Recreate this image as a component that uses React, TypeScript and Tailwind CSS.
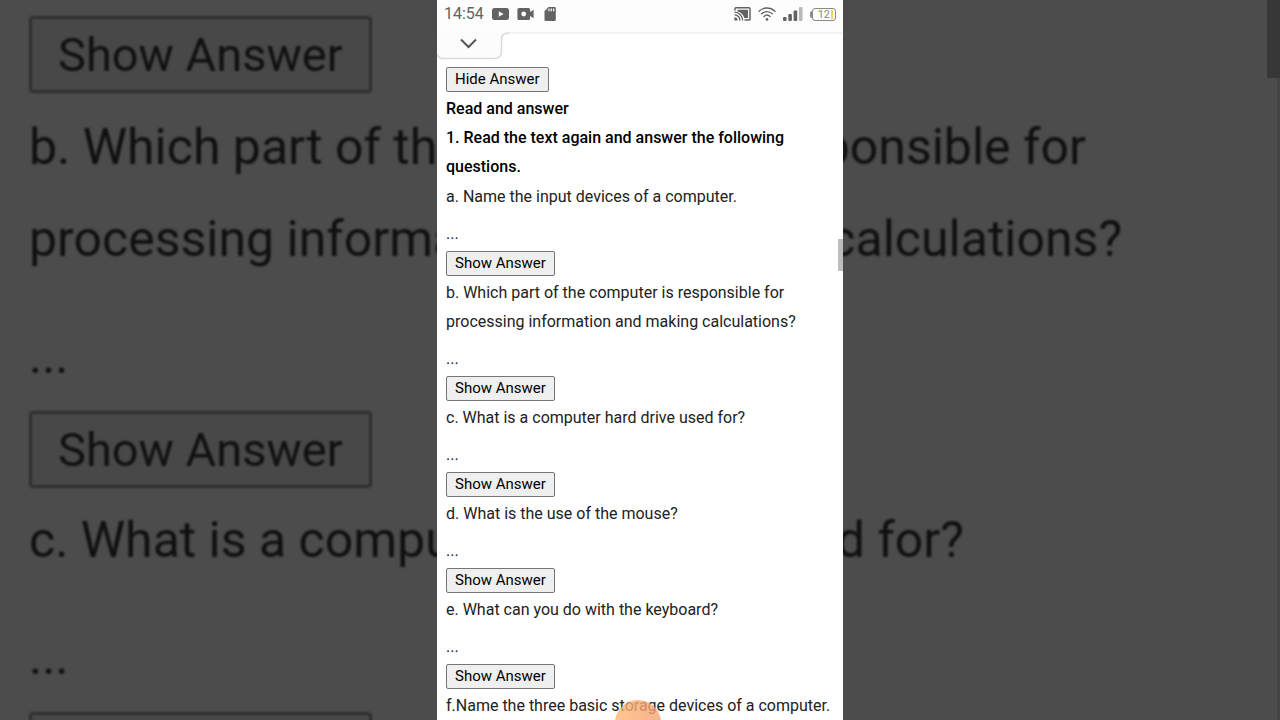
import React from 'react';

const questions = [
  'a. Name the input devices of a computer.',
  'b. Which part of the computer is responsible for processing information and making calculations?',
  'c. What is a computer hard drive used for?',
  'd. What is the use of the mouse?',
  'e. What can you do with the keyboard?',
];

function StatusBar() {
  return (
    <header className="flex h-[33px] items-start justify-between border-b border-[#f0f0f0] bg-[#fdfdfd] px-[7px] pt-1 text-[#636363] shadow-[0_1px_2px_#f3f3f3]">
      <div className="flex h-5 items-center">
        <span className="text-[16px] leading-5">14:54</span>
        {/* YouTube */}
        <svg className="ml-2" width="17" height="14" viewBox="0 0 17 14" aria-hidden="true">
          <rect x="0" y="1" width="17" height="12" rx="2.5" fill="currentColor" />
          <path d="M6.8 4.2 11.6 7 6.8 9.8Z" fill="#fff" />
        </svg>
        {/* Camera */}
        <svg className="ml-2" width="17" height="14" viewBox="0 0 17 14" aria-hidden="true">
          <path
            fillRule="evenodd"
            d="M2 1h9.5a1.6 1.6 0 0 1 1.6 1.6V5l3.5-2.3v8.6L13.1 9v2.4A1.6 1.6 0 0 1 11.5 13H2A1.6 1.6 0 0 1 .4 11.4V2.6A1.6 1.6 0 0 1 2 1Zm4.7 3.6a2.4 2.4 0 1 0 0 4.8 2.4 2.4 0 0 0 0-4.8Z"
            fill="currentColor"
          />
        </svg>
        {/* SD card */}
        <svg className="ml-[10px]" width="12" height="14" viewBox="0 0 12 14" aria-hidden="true">
          <path d="M4.5 0H10.5A1.3 1.3 0 0 1 11.8 1.3V12.7A1.3 1.3 0 0 1 10.5 14H1.8A1.3 1.3 0 0 1 .5 12.7V4.2Z" fill="currentColor" />
          <path d="M5 1.5v2.8M7.3 1.5v2.8M9.6 1.5v2.8" stroke="#fff" strokeWidth="1.2" />
        </svg>
      </div>
      <div className="flex h-5 items-center">
        {/* Cast */}
        <svg width="17" height="14" viewBox="0 0 17 14" fill="none" stroke="currentColor" aria-hidden="true">
          <path d="M1 3.5V1.7A.9.9 0 0 1 1.9.8H15.1a.9.9 0 0 1 .9.9V12.2a.9.9 0 0 1-.9.9H10.5" strokeWidth="1.5" />
          <path d="M3.5 2.8H14V11H10.3C9.3 7.5 6.8 5 3.5 4.2Z" fill="currentColor" stroke="none" />
          <path d="M.6 5.2a8.2 8.2 0 0 1 8 8.2M.6 7.9a5.4 5.4 0 0 1 5.3 5.5" strokeWidth="1.3" />
          <path d="M.4 10.3a3.2 3.2 0 0 1 3.2 3.2H.4Z" fill="currentColor" stroke="none" />
        </svg>
        {/* Wi-Fi */}
        <svg className="ml-[7px]" width="18" height="14" viewBox="0 0 18 14" fill="none" stroke="currentColor" strokeLinecap="round" aria-hidden="true">
          <path d="M1 4.2c4.6-4.3 11.4-4.3 16 0M3.4 6.9c3.3-3.1 7.9-3.1 11.2 0M5.9 9.5c1.9-1.8 4.3-1.8 6.2 0" strokeWidth="1.3" />
          <circle cx="9" cy="12.4" r="1.3" fill="currentColor" stroke="none" />
        </svg>
        {/* Signal */}
        <svg className="ml-[7px]" width="20" height="14" viewBox="0 0 20 14" fill="currentColor" aria-hidden="true">
          <rect x="0" y="10" width="3.6" height="4" rx="1" />
          <rect x="5.3" y="7" width="3.6" height="7" rx="1" />
          <rect x="10.6" y="3.5" width="3.6" height="10.5" rx="1" />
          <rect x="15.9" y="0" width="3.6" height="14" rx="1" fill="#b9b9b9" />
        </svg>
        {/* Battery */}
        <div className="ml-[7px] flex items-center">
          <span className="h-[7px] w-[2px] rounded-l-sm bg-[#8a8a8a]" />
          <div className="flex h-[13px] w-6 items-center justify-end gap-px rounded-[3px] border border-[#8a8a8a] pr-[2px]">
            <span className="text-[11px] leading-[11px] text-[#8a8a8a]">12</span>
            <span className="h-[9px] w-[2px] bg-[#ecd94c]" />
          </div>
        </div>
      </div>
    </header>
  );
}

function Backdrop() {
  const button =
    'block h-[77px] rounded-[4px] border-[3px] border-[#2f2f2f] bg-[#484848] px-[26px] text-[47px] leading-[70px]';
  return (
    <div
      aria-hidden="true"
      className="absolute inset-0 overflow-hidden bg-[#4c4c4c] text-[50px] leading-[92px] text-[#101010]"
    >
      <div className="px-[29px] pt-4 blur-[1px]">
        <button tabIndex={-1} className={button}>Show Answer</button>
        <div className="pt-2">
          {questions.slice(1, 3).map((question) => (
            <div key={question}>
              <p>{question}</p>
              <p className="mt-[25px]">...</p>
              <div className="pb-[6px] pt-[9px]">
                <button tabIndex={-1} className={button}>Show Answer</button>
              </div>
            </div>
          ))}
        </div>
      </div>
      <div className="absolute inset-y-0 right-0 w-[3px] bg-[#434343]" />
      <div className="absolute right-0 top-0 h-[78px] w-[13px] bg-[#373737]" />
    </div>
  );
}

export default function App() {
  const button =
    'block h-[25px] rounded-[2px] border border-[#767676] bg-[#efefef] px-2 text-[15px] leading-[23px] text-black';
  return (
    <div className="relative h-screen overflow-hidden font-['Roboto',sans-serif]">
      <Backdrop />

      <div className="relative mx-auto h-full w-full max-w-[406px] overflow-hidden bg-white text-[16px] leading-[29px] text-[#222]">
        <StatusBar />
        <button aria-label="Expand" className="relative block h-[26px] w-[64px] text-[#555]">
          <svg className="absolute left-0 top-[-2px] overflow-visible" width="72" height="30" viewBox="0 0 72 30">
            <path
              d="M0 0H72V2C67 2 64.5 4 64.5 8V21C64.5 25 61.5 27.5 58 27.5H6C3 27.5 1 26 0 23.5Z"
              fill="#fcfcfc"
            />
            <path
              d="M72 2C67 2 64.5 4 64.5 8V21C64.5 25 61.5 27.5 58 27.5H6C3 27.5 1 26 0 23.5"
              fill="none"
              stroke="#d9d9d9"
              strokeWidth="1.5"
            />
            <path d="M24 8.5 31.5 16 39 8.5" fill="none" stroke="currentColor" strokeWidth="2" />
          </svg>
        </button>

        <main className="px-[9px] pt-2">
          <button className={button}>Hide Answer</button>
          <div className="pt-[2px]">
            <h2 className="font-medium text-black">Read and answer</h2>
            <h3 className="font-medium text-black">1. Read the text again and answer the following questions.</h3>
            <div className="pt-px">
              {questions.map((question) => (
                <div key={question}>
                  <p>{question}</p>
                  <p className="mt-2">...</p>
                  <div className="pb-[2px] pt-[3px]">
                    <button className={button}>Show Answer</button>
                  </div>
                </div>
              ))}
              <p>f.Name the three basic storage devices of a computer.</p>
            </div>
          </div>
        </main>

        {/* Scrollbar thumb */}
        <div className="absolute right-0 top-[239px] h-8 w-[5px] bg-[#bdbdbd]" />
        {/* Touch bubble */}
        <div className="absolute -bottom-[26px] left-[178px] size-[46px] rounded-full bg-linear-to-r from-[#ffb672]/80 to-[#f5a173]/80" />
      </div>
    </div>
  );
}
